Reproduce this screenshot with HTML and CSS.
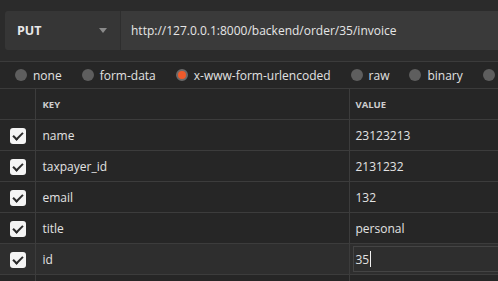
FILE: index.html
```html
<!DOCTYPE html>
<html lang="en">
<head>
  <meta charset="UTF-8" />
  <title>PUT invoice</title>
  <link rel="stylesheet" href="styles.css">
</head>
<body>
  <div class="request-bar">
    <div class="method">
      <span class="method-name">PUT</span>
      <span class="caret"></span>
    </div>
    <div class="url">http://127.0.0.1:8000/backend/order/35/invoice</div>
  </div>

  <div class="body-types">
    <label class="radio"><span class="dot"></span>none</label>
    <label class="radio"><span class="dot"></span>form-data</label>
    <label class="radio selected"><span class="dot"></span>x-www-form-urlencoded</label>
    <label class="radio"><span class="dot"></span>raw</label>
    <label class="radio"><span class="dot"></span>binary</label>
    <label class="radio"><span class="dot"></span></label>
  </div>

  <table class="params">
    <tr class="head">
      <th class="check-col"></th>
      <th class="key-col">KEY</th>
      <th>VALUE</th>
    </tr>
    <tr><td class="check-col"><span class="box"></span></td><td>name</td><td>23123213</td></tr>
    <tr><td class="check-col"><span class="box"></span></td><td>taxpayer_id</td><td>2131232</td></tr>
    <tr><td class="check-col"><span class="box"></span></td><td>email</td><td>132</td></tr>
    <tr><td class="check-col"><span class="box"></span></td><td>title</td><td>personal</td></tr>
    <tr class="hover"><td class="check-col"><span class="box"></span></td><td>id</td><td><div class="edit">35<span class="cursor"></span></div></td></tr>
    <tr class="empty"><td class="check-col"></td><td></td><td></td></tr>
  </table>
</body>
</html>
```

FILE: styles.css
```css
body {
  margin: 0;
  background-color: #2b2b2b;
  font-family: 'Open Sans', sans-serif;
  font-size: 12px;
  color: #e4e4e4;
  width: 498px;
  height: 281px;
  overflow: hidden;
}

.request-bar {
  display: flex;
  margin: 11px 0 0 5px;
  height: 39px;
  border-radius: 3px 0 0 3px;
  overflow: hidden;
}

.method {
  width: 116px;
  background-color: #363636;
  border-right: 1px solid #2e2e2e;
  display: flex;
  align-items: center;
  justify-content: space-between;
  padding: 0 13px 0 12px;
  box-sizing: border-box;
}

.method-name {
  font-weight: bold;
  font-size: 12.5px;
  color: #e8e8e8;
}

.caret {
  width: 0;
  height: 0;
  border-left: 4px solid transparent;
  border-right: 4px solid transparent;
  border-top: 5px solid #8a8a8a;
}

.url {
  flex: 1;
  background-color: #3a3a3a;
  display: flex;
  align-items: center;
  padding-left: 10px;
  color: #e6e6e6;
}

.body-types {
  margin-top: 11px;
  height: 26px;
  border-top: 1px solid #3b3b3b;
  border-bottom: 1px solid #3b3b3b;
  background-color: #262626;
  display: flex;
  align-items: center;
  padding-left: 15px;
}

.radio {
  display: flex;
  align-items: center;
  margin-right: 20px;
  color: #e2e2e2;
  white-space: nowrap;
}

.dot {
  width: 12px;
  height: 12px;
  border-radius: 50%;
  background-color: #5e5e5e;
  margin-right: 6px;
  box-sizing: border-box;
}

.selected .dot {
  background-color: #ee5a2b;
  border: 2px solid #6a6a6a;
}

.params {
  width: 100%;
  border-collapse: collapse;
  background-color: #262626;
}

.params td,
.params th {
  border-bottom: 1px solid #3c3c3c;
  border-right: 1px solid #3c3c3c;
  height: 30px;
  padding: 0 0 0 7px;
  text-align: left;
  color: #e2e2e2;
}

.params th {
  font-size: 9.5px;
  font-weight: bold;
  color: #cfcfcf;
}

.params td:last-child,
.params th:last-child {
  border-right: none;
  padding-left: 6px;
}

.params .check-col {
  width: 35px;
  padding: 0;
  text-align: center;
  box-sizing: border-box;
}

.key-col {
  width: 306px;
}

.box {
  display: inline-block;
  width: 16px;
  height: 16px;
  background-color: #f4f4f4;
  border-radius: 3px;
  vertical-align: middle;
  position: relative;
  left: 1px;
}

.box::after {
  content: "";
  position: absolute;
  left: 5px;
  top: 2px;
  width: 4px;
  height: 8px;
  border-right: 2px solid #2a2a2a;
  border-bottom: 2px solid #2a2a2a;
  transform: rotate(45deg);
}

.hover td {
  background-color: #2e2e2e;
}

.params .hover td:last-child {
  padding-left: 3px;
}

.edit {
  height: 24px;
  border: 1px solid #444;
  border-right: none;
  display: flex;
  align-items: center;
  padding-left: 2px;
}

.cursor {
  display: inline-block;
  width: 1px;
  height: 16px;
  background-color: #f0f0f0;
  margin-left: 1px;
}

.params .empty td {
  border-bottom: none;
  height: 6px;
}
```
